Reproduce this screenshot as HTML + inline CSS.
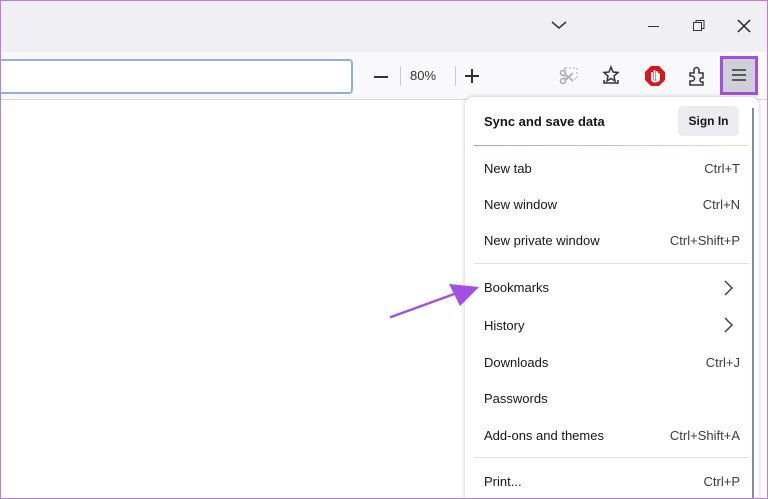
<!DOCTYPE html>
<html style="width:768px;height:499px;overflow:hidden"><head><meta charset="utf-8"><style>
*{margin:0;padding:0;box-sizing:border-box}
body{width:768px;height:499px;overflow:hidden;background:#fff;font-family:"Liberation Sans",sans-serif;color:#15141a;position:relative}
.frame{position:absolute;left:0;top:0;width:768px;height:499px;border:1px solid #b77ee0;z-index:10;pointer-events:none}
.title{position:absolute;left:0;top:0;width:768px;height:52px;background:#f0f0f4}
.tool{position:absolute;left:0;top:52px;width:768px;height:48px;background:#f9f9fb;border-bottom:1px solid #d9d9de}
.url{position:absolute;left:-6px;top:59px;width:359px;height:35px;background:#fff;border:2px solid #8fb1dc;border-radius:4px}
.a{position:absolute}
.panel{position:absolute;left:465px;top:97px;width:294px;height:402px;background:#fff;border-radius:8px 8px 0 0;box-shadow:0 0 4px rgba(0,0,0,.25)}
.item{position:absolute;left:484px;font-size:13px;color:#15141a}
.sc{position:absolute;right:28px;font-size:13px;color:#3b3b42}
.sep{position:absolute;left:474px;width:275px;height:1px;background:#e0e0e6}
</style></head><body>
<div class="title"></div>
<svg class="a" style="left:550px;top:19px" width="18" height="12"><path d="M2 3 L9 9 L16 3" stroke="#333" stroke-width="1.5" fill="none"/></svg>
<div class="a" style="left:648px;top:26px;width:11px;height:1px;background:#333"></div>
<svg class="a" style="left:692px;top:19px" width="14" height="14"><rect x="1.5" y="3.5" width="8" height="8" stroke="#333" fill="none"/><path d="M4 3.5V1.5h8v8h-2" stroke="#333" fill="none"/></svg>
<svg class="a" style="left:737px;top:19px" width="14" height="14"><path d="M1 1L13 13M13 1L1 13" stroke="#222" stroke-width="1.5"/></svg>
<div class="tool"></div>
<div class="url"></div>
<div class="a" style="left:374px;top:76px;width:14px;height:2px;background:#333"></div>
<div class="a" style="left:400px;top:66px;width:1px;height:20px;background:#ccc"></div>
<div class="a" style="left:410px;top:68px;font-size:13px;color:#333">80%</div>
<div class="a" style="left:455px;top:66px;width:1px;height:20px;background:#ccc"></div>
<svg class="a" style="left:464px;top:68px" width="16" height="16"><path d="M8 1V15M1 8H15" stroke="#333" stroke-width="2"/></svg>
<svg class="a" style="left:559px;top:66px" width="20" height="20"><rect x="6" y="2" width="12" height="11" stroke="#aaa" stroke-dasharray="2 2" fill="none"/><circle cx="4" cy="15" r="2.5" stroke="#aaa" fill="none" stroke-width="1.5"/><circle cx="4" cy="7" r="2.5" stroke="#aaa" fill="none" stroke-width="1.5"/><path d="M6 8L14 15M6 14L14 7" stroke="#aaa" stroke-width="1.5"/></svg>
<svg class="a" style="left:601px;top:65px" width="20" height="20"><path d="M10 2L12 7L17 7.5L13 11L14 16L10 13.5L6 16L7 11L3 7.5L8 7Z" stroke="#333" stroke-width="1.5" fill="none"/><path d="M3 15V18H17V15" stroke="#333" stroke-width="1.5" fill="none"/></svg>
<svg class="a" style="left:644px;top:65px" width="22" height="22"><path d="M7 1H15L21 7V15L15 21H7L1 15V7Z" fill="#d8161d"/><path d="M8 15V8M10.5 14V6M13 14V7M15 15V9M8 15Q11 18 15 15" stroke="#fff" stroke-width="2" fill="none" stroke-linecap="round"/></svg>
<svg class="a" style="left:688px;top:65px" width="20" height="22"><path d="M2 8H6V5A2.5 2.5 0 0 1 11 5V8H15V13H13A2.5 2.5 0 0 0 13 17H15V20H2V16H4A2.5 2.5 0 0 0 4 11H2Z" stroke="#333" stroke-width="1.5" fill="none"/></svg>
<div class="a" style="left:720px;top:56px;width:38px;height:39px;background:#cfcfd8;border:3px solid #a24fe3"></div>
<svg class="a" style="left:731px;top:68px" width="16" height="14"><path d="M1 2H15M1 7H15M1 12H15" stroke="#333" stroke-width="1.5"/></svg>
<div class="panel"></div>
<div class="a" style="left:752px;top:108px;width:2px;height:391px;background:#8a8a90"></div>
<div class="item" style="top:114px;font-weight:bold;font-size:13px">Sync and save data</div>
<div class="a" style="left:678px;top:106px;width:61px;height:30px;background:#ececf0;border-radius:5px;font-size:12px;font-weight:bold;text-align:center;line-height:30px">Sign In</div>
<div class="a" style="left:474px;top:145px;width:275px;height:1px;background:linear-gradient(90deg,#b89ad8,#ece0c0)"></div>
<div class="item" style="top:161px">New tab</div><div class="sc" style="top:161px">Ctrl+T</div>
<div class="item" style="top:197px">New window</div><div class="sc" style="top:197px">Ctrl+N</div>
<div class="item" style="top:233px">New private window</div><div class="sc" style="top:233px">Ctrl+Shift+P</div>
<div class="sep" style="top:263px"></div>
<div class="item" style="top:280px">Bookmarks</div>
<svg class="a" style="left:723px;top:280px" width="12" height="16"><path d="M2 1L9 8L2 15" stroke="#444" stroke-width="1.5" fill="none"/></svg>
<div class="item" style="top:318px">History</div>
<svg class="a" style="left:723px;top:317px" width="12" height="16"><path d="M2 1L9 8L2 15" stroke="#444" stroke-width="1.5" fill="none"/></svg>
<div class="item" style="top:355px">Downloads</div><div class="sc" style="top:355px">Ctrl+J</div>
<div class="item" style="top:391px">Passwords</div>
<div class="item" style="top:428px">Add-ons and themes</div><div class="sc" style="top:428px">Ctrl+Shift+A</div>
<div class="sep" style="top:457px"></div>
<div class="item" style="top:474px">Print...</div><div class="sc" style="top:474px">Ctrl+P</div>
<svg class="a" style="left:385px;top:280px" width="100" height="45"><path d="M6 37L72 13" stroke="#a24fe3" stroke-width="2.5" stroke-linecap="round"/><path d="M94 7L64 4L75 26Z" fill="#a24fe3"/></svg>
<div class="frame"></div>
</body></html>
